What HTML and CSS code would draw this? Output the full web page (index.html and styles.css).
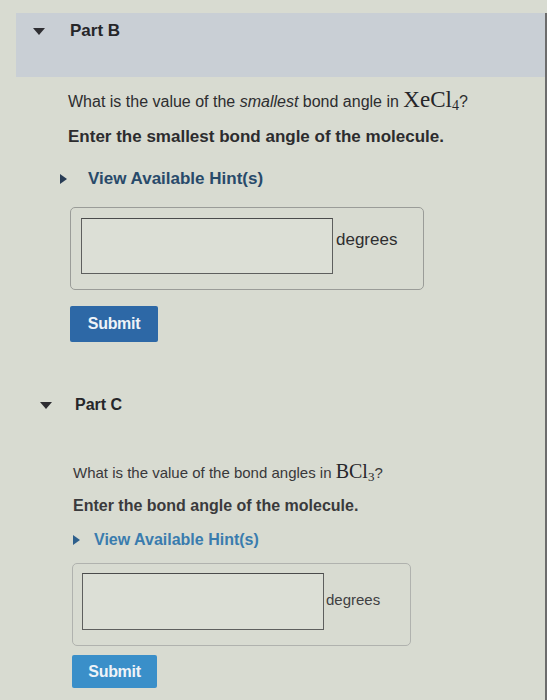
FILE: index.html
```html
<!DOCTYPE html>
<html>
<head>
<meta charset="utf-8">
<link rel="stylesheet" href="styles.css">
</head>
<body>
<div class="page">
  <div class="part-head part-head-b">
    <span class="caret-down"></span>
    <span class="part-title">Part B</span>
  </div>
  <div class="part-body part-body-b">
    <p class="question">What is the value of the <em>smallest</em> bond angle in <span class="chem">XeCl<sub>4</sub></span>?</p>
    <p class="instruction">Enter the smallest bond angle of the molecule.</p>
    <div class="hint hint-b"><span class="caret-right"></span><span>View Available Hint(s)</span></div>
    <div class="answer answer-b">
      <div class="input input-b"></div>
      <span class="unit">degrees</span>
    </div>
    <button class="submit submit-b">Submit</button>
  </div>

  <div class="part-head part-head-c">
    <span class="caret-down"></span>
    <span class="part-title">Part C</span>
  </div>
  <div class="part-body part-body-c">
    <p class="question question-c">What is the value of the bond angles in <span class="chem">BCl<sub>3</sub></span>?</p>
    <p class="instruction instruction-c">Enter the bond angle of the molecule.</p>
    <div class="hint hint-c"><span class="caret-right"></span><span>View Available Hint(s)</span></div>
    <div class="answer answer-c">
      <div class="input input-c"></div>
      <span class="unit unit-c">degrees</span>
    </div>
    <button class="submit submit-c">Submit</button>
  </div>
  <div class="bezel"></div>
</div>
</body>
</html>
```

FILE: styles.css
```css
html, body {
  margin: 0;
  padding: 0;
}
body {
  background: #d8dbd1;
  font-family: "Liberation Sans", Arial, sans-serif;
  color: #2e2e2e;
  width: 547px;
  height: 700px;
  overflow: hidden;
}
.page {
  position: relative;
  height: 700px;
  border-right: 2px solid #6c6c6c;
  box-sizing: border-box;
}
.part-head {
  display: flex;
  align-items: center;
}
.part-head-b {
  margin: 13px 0 0 16px;
  height: 64px;
  background: #c9cfd5;
  align-items: flex-start;
  padding: 8px 0 0 17px;
  box-sizing: border-box;
}
.caret-down {
  width: 0;
  height: 0;
  border-left: 6px solid transparent;
  border-right: 6px solid transparent;
  border-top: 7px solid #2f2f33;
  margin-right: 25px;
  margin-top: 7px;
}
.part-title {
  font-size: 17px;
  font-weight: bold;
  color: #262629;
  line-height: 20px;
}
.part-body {
  display: flex;
  flex-direction: column;
  align-items: flex-start;
}
.part-body-b {
  margin-left: 68px;
  padding-top: 11px;
}
p {
  margin: 0;
}
.question {
  font-size: 16px;
  line-height: 24px;
  color: #2d2d2f;
}
.chem {
  font-family: "Liberation Serif", "Times New Roman", serif;
  font-size: 23px;
  color: #26262a;
}
.chem sub {
  font-size: 14px;
  vertical-align: -3px;
  line-height: 0;
}
.instruction {
  margin-top: 12px;
  font-size: 17px;
  font-weight: bold;
  line-height: 22px;
  color: #2c2c2e;
}
.hint {
  display: flex;
  align-items: center;
  font-weight: bold;
  font-size: 17px;
  line-height: 20px;
}
.hint-b {
  margin: 21px 0 0 -8px;
  color: #284a6a;
}
.caret-right {
  width: 0;
  height: 0;
  border-top: 5px solid transparent;
  border-bottom: 5px solid transparent;
  border-left: 7px solid #283c55;
  margin-right: 21px;
}
.answer {
  display: flex;
  align-items: flex-start;
  border: 1px solid #9a9c98;
  border-radius: 5px;
  box-sizing: border-box;
}
.answer-b {
  margin: 18px 0 0 2px;
  width: 354px;
  height: 83px;
  padding: 10px 0 0 10px;
}
.input {
  border: 1px solid #5e5f5e;
  border-top-color: #4a4b4b;
  background: #dcdfd6;
  box-sizing: border-box;
}
.input-b {
  width: 252px;
  height: 56px;
}
.unit {
  font-size: 17px;
  color: #2e2e30;
  margin: 12px 0 0 3px;
}
.submit {
  border: none;
  border-radius: 2px;
  font-family: "Liberation Sans", Arial, sans-serif;
  font-weight: bold;
  font-size: 16px;
  color: #eef3f8;
  padding: 0;
  letter-spacing: -0.3px;
}
.submit-b {
  margin: 16px 0 0 2px;
  width: 88px;
  height: 36px;
  background: #2d68a6;
}
.part-head-c {
  margin: 53px 0 0 40px;
}
.part-head-c .caret-down {
  margin-top: 0;
  margin-right: 23px;
  border-top-color: #2c2c30;
}
.part-head-c .part-title {
  font-size: 16px;
}
.part-body-c {
  margin-left: 73px;
  padding-top: 44px;
}
.question-c {
  font-size: 15px;
  color: #38383a;
}
.question-c .chem {
  font-size: 20px;
}
.question-c .chem sub {
  font-size: 13px;
}
.instruction-c {
  margin-top: 10px;
  font-size: 16px;
  font-weight: bold;
  color: #3a3a3c;
}
.hint-c {
  margin: 13px 0 0 0;
  color: #3a7cae;
  font-size: 16px;
}
.hint-c .caret-right {
  border-left-color: #2e5f8c;
  margin-right: 14px;
}
.answer-c {
  margin: 13px 0 0 -1px;
  width: 339px;
  height: 83px;
  padding: 9px 0 0 9px;
  border-color: #b0b2ae;
}
.input-c {
  width: 242px;
  height: 57px;
}
.unit-c {
  font-size: 15px;
  color: #404042;
  margin-top: 18px;
  margin-left: 2px;
}
.submit-c {
  margin: 9px 0 0 -1px;
  width: 85px;
  height: 33px;
  background: #3a8fc9;
  font-size: 16px;
}
.bezel {
  position: absolute;
  left: 0;
  right: -2px;
  bottom: 0;
  height: 8px;
  background: #4a4244;
}
```
